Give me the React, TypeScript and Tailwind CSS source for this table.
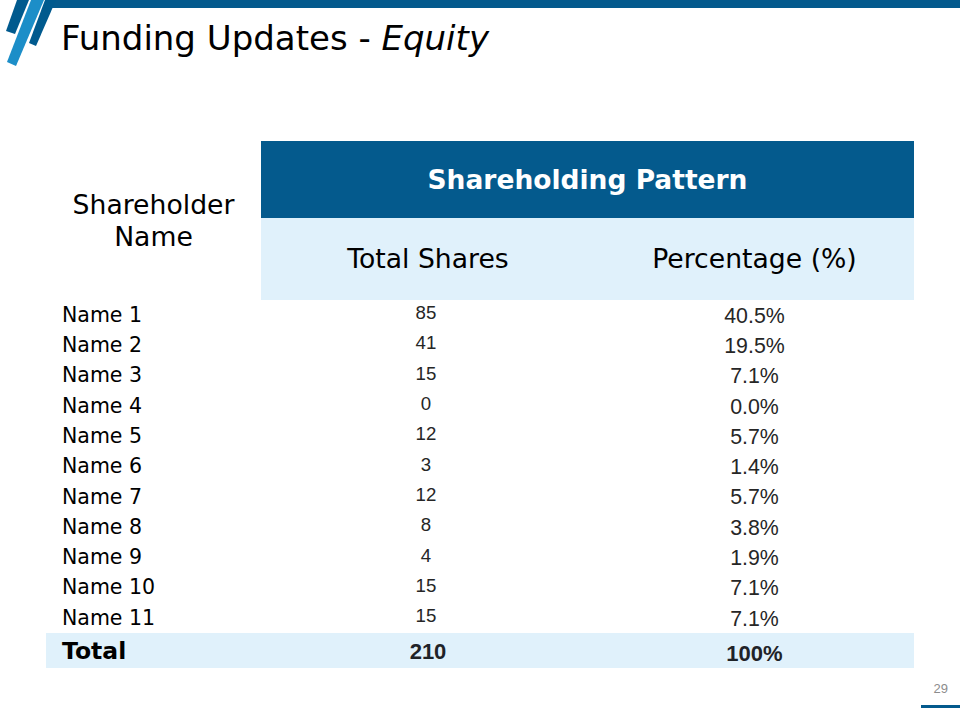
import React from 'react';

const rows = [
    { name: "Name 1", shares: "85", pct: "40.5%" },
    { name: "Name 2", shares: "41", pct: "19.5%" },
    { name: "Name 3", shares: "15", pct: "7.1%" },
    { name: "Name 4", shares: "0", pct: "0.0%" },
    { name: "Name 5", shares: "12", pct: "5.7%" },
    { name: "Name 6", shares: "3", pct: "1.4%" },
    { name: "Name 7", shares: "12", pct: "5.7%" },
    { name: "Name 8", shares: "8", pct: "3.8%" },
    { name: "Name 9", shares: "4", pct: "1.9%" },
    { name: "Name 10", shares: "15", pct: "7.1%" },
    { name: "Name 11", shares: "15", pct: "7.1%" },
];

const Logo = () => (
    <svg className="absolute left-0 top-0" width="60" height="70" viewBox="0 0 60 70">
        <polygon points="17,0 29,0 15,34 6,31" fill="#005a8e" />
        <polygon points="31,0 44,0 16,66 7,62" fill="#1c8ec8" />
        <polygon points="45,0 56,0 36,46 29,43" fill="#005a8e" />
    </svg>
);

const App = () => {
    return (
        <div className="relative w-[960px] h-[720px] bg-white overflow-hidden font-['DejaVu_Sans',sans-serif] text-black">
            {/* top bar + logo */}
            <div className="ml-[52px] h-2 bg-[#045a8d]" />
            <Logo />

            {/* title */}
            <h1 className="mt-[11px] pl-[61px] text-[34px] leading-[38px] font-normal">
                Funding Updates - <span className="italic">Equity</span>
            </h1>

            {/* table */}
            <div className="mt-[84px] ml-[46px] grid grid-cols-[215px_334px_319px]">
                <div className="row-span-2 flex items-center justify-center text-center text-[26.67px] leading-[32px]">
                    <span>Shareholder<br />Name</span>
                </div>
                <div className="col-span-2 h-[77px] flex items-center justify-center bg-[#045a8d] text-white font-bold text-[26.5px]">
                    Shareholding Pattern
                </div>
                <div className="h-[82px] flex items-center justify-center bg-[#e0f1fb] text-[26.67px]">
                    Total Shares
                </div>
                <div className="h-[82px] flex items-center justify-center bg-[#e0f1fb] text-[26.67px]">
                    Percentage (%)
                </div>

                {rows.map((r, i) => (
                    <React.Fragment key={i}>
                        <div className="h-[30.3px] flex items-center pl-4 text-[20.5px]">{r.name}</div>
                        <div className="h-[30.3px] flex items-center justify-center pb-1 pr-1 text-[18.67px] text-[#262626] font-['Liberation_Sans',sans-serif]">
                            {r.shares}
                        </div>
                        <div className="h-[30.3px] flex items-center justify-center pt-[3px] text-[21.33px] text-[#262626] font-['Liberation_Sans',sans-serif]">
                            {r.pct}
                        </div>
                    </React.Fragment>
                ))}

                <div className="col-span-3 h-[35px] grid grid-cols-[215px_334px_319px] bg-[#e0f1fb]">
                    <div className="flex items-center pl-4 text-[23.5px] font-bold">Total</div>
                    <div className="flex items-center justify-center text-[22px] font-bold text-[#1f2328] font-['Liberation_Sans',sans-serif]">
                        210
                    </div>
                    <div className="flex items-center justify-center pt-1 text-[22px] font-bold text-[#1f2328] font-['Liberation_Sans',sans-serif]">
                        100%
                    </div>
                </div>
            </div>

            {/* footer */}
            <div className="mt-[13px] pr-[12px] text-right text-[13px] leading-[16px] text-[#8c8c8c] font-['Liberation_Sans',sans-serif]">
                29
            </div>
            <div className="mt-[8px] ml-auto w-[39px] h-[3px] bg-[#045a8d]" />
        </div>
    );
};

export default App;
